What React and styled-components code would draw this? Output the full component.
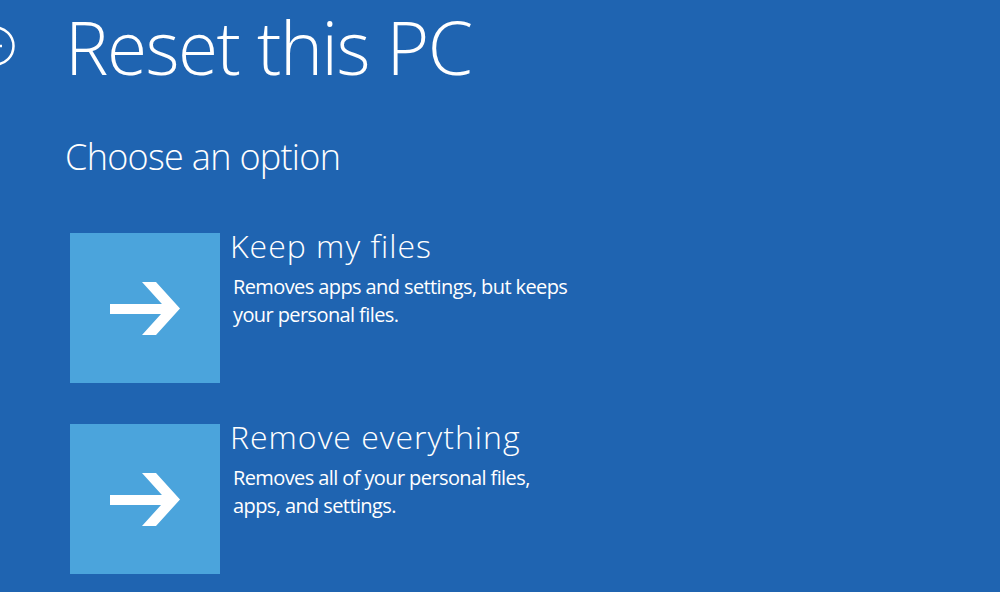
import React from 'react';
import styled, { createGlobalStyle } from 'styled-components';

const GlobalStyle = createGlobalStyle`
    html, body {
        margin: 0;
        padding: 0;
        background: #1f64b1;
        overflow: hidden;
    }
    * { box-sizing: border-box; }
`;

const Page = styled.div`
    width: 1000px;
    height: 592px;
    background: #1f64b1;
    color: #ffffff;
    font-family: "Open Sans", "Noto Sans", sans-serif;
    padding: 0 0 0 65px;
    display: flex;
    flex-direction: column;
    overflow: hidden;
`;

const Header = styled.div`
    display: flex;
    align-items: center;
    margin-left: -90px;
    gap: 50px;
`;

const BackButton = styled.div`
    width: 40px;
    height: 40px;
    flex: none;
    margin-top: -3px;
`;

const Title = styled.h1`
    margin: 0;
    font-weight: 300;
    font-size: 73px;
    line-height: 94px;
    letter-spacing: -1.5px;
`;

const Subtitle = styled.h2`
    margin: 38px 0 0 0;
    font-weight: 300;
    font-size: 36px;
    line-height: 50px;
    letter-spacing: -0.7px;
`;

const OptionList = styled.div`
    display: flex;
    flex-direction: column;
    gap: 41px;
    margin-top: 51px;
    margin-left: 5px;
`;

const Option = styled.div`
    display: flex;
    align-items: flex-start;
    gap: 10px;
    cursor: pointer;
`;

const Tile = styled.div`
    width: 150px;
    height: 150px;
    background: #4ba4dc;
    display: flex;
    align-items: center;
    justify-content: center;
    flex: none;
`;

const Text = styled.div`
    display: flex;
    flex-direction: column;
    margin-top: -9px;
`;

const OptionTitle = styled.div`
    font-weight: 300;
    font-size: 32px;
    line-height: 44px;
    letter-spacing: 1px;
`;

const OptionDesc = styled.div`
    font-size: 20px;
    line-height: 28px;
    margin: 5px 0 0 3px;
    letter-spacing: -0.6px;
    white-space: nowrap;
`;

const DescLine = styled.span`
    display: block;
`;

const Arrow = () => (
    <svg width="70" height="53" viewBox="0 0 70 53">
        <rect x="0" y="22" width="60" height="10" fill="#fff" />
        <polygon points="32,0 46,0 70,26.5 46,53 32,53 56,26.5" fill="#fff" />
    </svg>
);

const BackIcon = () => (
    <svg width="40" height="40" viewBox="0 0 40 40">
        <circle cx="20" cy="20" r="18.5" stroke="#fff" strokeWidth="2.5" fill="none" />
        <path d="M11 20 H27 M18 13 L11 20 L18 27" stroke="#fff" strokeWidth="2.5" fill="none" />
    </svg>
);

const options = [
    { title: 'Keep my files', lines: ['Removes apps and settings, but keeps', 'your personal files.'] },
    { title: 'Remove everything', lines: ['Removes all of your personal files,', 'apps, and settings.'] },
];

const App = () => {
    return (
        <Page>
            <GlobalStyle />
            <Header>
                <BackButton><BackIcon /></BackButton>
                <Title>Reset this PC</Title>
            </Header>
            <Subtitle>Choose an option</Subtitle>
            <OptionList>
                {options.map((o) => (
                    <Option key={o.title}>
                        <Tile><Arrow /></Tile>
                        <Text>
                            <OptionTitle>{o.title}</OptionTitle>
                            <OptionDesc>
                                {o.lines.map((l) => <DescLine key={l}>{l}</DescLine>)}
                            </OptionDesc>
                        </Text>
                    </Option>
                ))}
            </OptionList>
        </Page>
    );
};

export default App;
